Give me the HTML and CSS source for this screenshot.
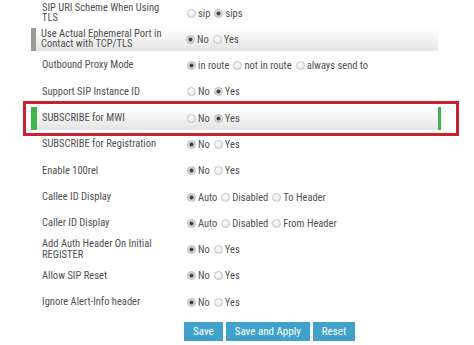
FILE: index.html
```html
<!DOCTYPE html>
<html lang="en">
<head>
    <meta charset="UTF-8">
    <meta name="viewport" content="width=device-width, initial-scale=1.0">
    <title>SIP Account Settings</title>
    <link rel="stylesheet" href="styles.css">
</head>
<body>
    <main class="settings">
        <div class="row">
            <div class="label">SIP URI Scheme When Using TLS</div>
            <div class="value">
                <label><input type="radio" name="scheme"> sip</label>
                <label><input type="radio" name="scheme" checked> sips</label>
            </div>
        </div>
        <div class="row grayMark">
            <div class="label">Use Actual Ephemeral Port in Contact with TCP/TLS</div>
            <div class="value">
                <label><input type="radio" name="ephemeral" checked> No</label>
                <label><input type="radio" name="ephemeral"> Yes</label>
            </div>
        </div>
        <div class="row">
            <div class="label">Outbound Proxy Mode</div>
            <div class="value">
                <label><input type="radio" name="proxy" checked> in route</label>
                <label><input type="radio" name="proxy"> not in route</label>
                <label><input type="radio" name="proxy"> always send to</label>
            </div>
        </div>
        <div class="row">
            <div class="label">Support SIP Instance ID</div>
            <div class="value">
                <label><input type="radio" name="instance"> No</label>
                <label><input type="radio" name="instance" checked> Yes</label>
            </div>
        </div>
        <div class="row greenMark">
            <div class="label">SUBSCRIBE for MWI</div>
            <div class="value">
                <label><input type="radio" name="mwi"> No</label>
                <label><input type="radio" name="mwi" checked> Yes</label>
            </div>
        </div>
        <div class="row">
            <div class="label">SUBSCRIBE for Registration</div>
            <div class="value">
                <label><input type="radio" name="subreg" checked> No</label>
                <label><input type="radio" name="subreg"> Yes</label>
            </div>
        </div>
        <div class="row">
            <div class="label">Enable 100rel</div>
            <div class="value">
                <label><input type="radio" name="rel" checked> No</label>
                <label><input type="radio" name="rel"> Yes</label>
            </div>
        </div>
        <div class="row">
            <div class="label">Callee ID Display</div>
            <div class="value">
                <label><input type="radio" name="callee" checked> Auto</label>
                <label><input type="radio" name="callee"> Disabled</label>
                <label><input type="radio" name="callee"> To Header</label>
            </div>
        </div>
        <div class="row">
            <div class="label">Caller ID Display</div>
            <div class="value">
                <label><input type="radio" name="caller" checked> Auto</label>
                <label><input type="radio" name="caller"> Disabled</label>
                <label><input type="radio" name="caller"> From Header</label>
            </div>
        </div>
        <div class="row">
            <div class="label">Add Auth Header On Initial REGISTER</div>
            <div class="value">
                <label><input type="radio" name="auth" checked> No</label>
                <label><input type="radio" name="auth"> Yes</label>
            </div>
        </div>
        <div class="row">
            <div class="label">Allow SIP Reset</div>
            <div class="value">
                <label><input type="radio" name="reset" checked> No</label>
                <label><input type="radio" name="reset"> Yes</label>
            </div>
        </div>
        <div class="row">
            <div class="label">Ignore Alert-Info header</div>
            <div class="value">
                <label><input type="radio" name="alert" checked> No</label>
                <label><input type="radio" name="alert"> Yes</label>
            </div>
        </div>

        <div class="buttons">
            <button type="button">Save</button>
            <button type="button">Save and Apply</button>
            <button type="button">Reset</button>
        </div>
    </main>
</body>
</html>
```

FILE: styles.css
```css
* {
    box-sizing: border-box;
    margin: 0;
    padding: 0;
}

html {
    color: #505050;
    font-family: "Roboto Condensed", "Liberation Sans", sans-serif;
    font-size: 10.5px;
}

body {
    background-color: white;
}

.settings {
    display: flex;
    flex-direction: column;
    gap: 3.3px;
    padding-top: 1.5px;
}

.row {
    position: relative;
    display: flex;
    align-items: center;
    height: 23px;
    width: 410px;
    margin-left: 31px;
    padding-left: 11px;
}

.label {
    flex: 0 0 145px;
    padding-right: 12px;
    line-height: 10.5px;
}

.value {
    display: flex;
    align-items: center;
    gap: 4px;
}

.value label {
    display: flex;
    align-items: center;
    gap: 2px;
}

.value input {
    appearance: none;
    width: 9px;
    height: 9px;
    border-radius: 50%;
    border: 1px solid #c4c4c4;
    background: radial-gradient(circle at 40% 35%, #fff 0%, #e4e4e4 80%);
}

.value input:checked {
    border-color: #b4b4b4;
    background: radial-gradient(circle, #444 0, #444 1.6px, #d8d8d8 2.4px, #f2f2f2 100%);
}

.grayMark,
.greenMark {
    padding-left: 5px;
    background: linear-gradient(#fff, #e4e4e4);
}

.grayMark {
    border-left: 5px solid #9a9a9a;
    width: 407px;
}

.greenMark {
    border-left: 6px solid #3db54a;
    border-right: 3px solid #3db54a;
}

/* red frame drawn round the MWI row */
.greenMark::after {
    content: "";
    position: absolute;
    left: -14px;
    right: -21px;
    top: -6px;
    bottom: -6px;
    border: 3px solid #cc2131;
}

.buttons {
    display: flex;
    gap: 3px;
    margin-top: 5px;
    margin-left: 184px;
}

.buttons button {
    height: 19px;
    padding: 0 9px;
    border: none;
    background-color: #3fa2cb;
    color: white;
    font-family: inherit;
    font-size: 11px;
}
```
